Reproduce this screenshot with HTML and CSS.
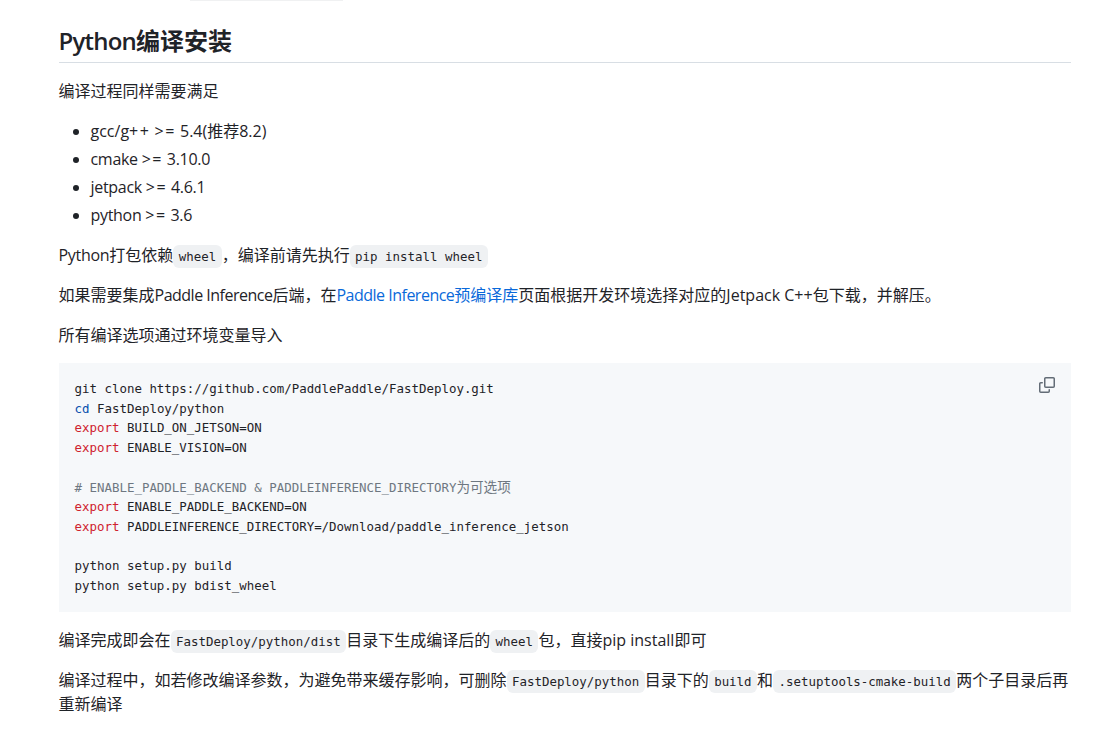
FILE: index.html
```html
<!DOCTYPE html>
<html lang="zh-CN">
<head>
<meta charset="utf-8">
<title>Python编译安装</title>
<link rel="stylesheet" href="styles.css">
</head>
<body>
<div class="top-sliver"></div>
<article class="markdown">
<h2><span class="title-latin">Python</span>编译安装</h2>
<p>编译过程同样需要满足</p>
<ul>
<li>gcc/g<span class="wide">++</span> <span class="wide">&gt;=</span> 5.4(推荐8.2)</li>
<li class="tight">cmake <span class="wide">&gt;=</span> 3.10.0</li>
<li class="tight">jetpack <span class="wide">&gt;=</span> 4.6.1</li>
<li class="tight">python <span class="wide">&gt;=</span> 3.6</li>
</ul>
<p><span class="tight">Python</span>打包依赖<code>wheel</code>，编译前请先执行<code>pip install wheel</code></p>
<p>如果需要集成<span class="narrow">Paddle Inference</span>后端，在<a href="#"><span class="narrow">Paddle Inference</span>预编译库</a>页面根据开发环境选择对应的Jetpack C++包下载，并解压。</p>
<p>所有编译选项通过环境变量导入</p>
<div class="code-block">
<pre>git clone https://github.com/PaddlePaddle/FastDeploy.git
<span class="builtin">cd</span> FastDeploy/python
<span class="kw">export</span> BUILD_ON_JETSON=ON
<span class="kw">export</span> ENABLE_VISION=ON

<span class="comment"># ENABLE_PADDLE_BACKEND &amp; PADDLEINFERENCE_DIRECTORY<span class="cjk">为可选项</span></span>
<span class="kw">export</span> ENABLE_PADDLE_BACKEND=ON
<span class="kw">export</span> PADDLEINFERENCE_DIRECTORY=/Download/paddle_inference_jetson

python setup.py build
python setup.py bdist_wheel</pre>
<svg class="copy" viewBox="0 0 16 16" width="16" height="16" aria-hidden="true"><path d="M0 6.75C0 5.784.784 5 1.75 5h1.5a.75.75 0 0 1 0 1.5h-1.5a.25.25 0 0 0-.25.25v7.5c0 .138.112.25.25.25h7.5a.25.25 0 0 0 .25-.25v-1.5a.75.75 0 0 1 1.5 0v1.5A1.75 1.75 0 0 1 9.25 16h-7.5A1.75 1.75 0 0 1 0 14.25Z"/><path d="M5 1.75C5 .784 5.784 0 6.75 0h7.5C15.216 0 16 .784 16 1.75v7.5A1.75 1.75 0 0 1 14.25 11h-7.5A1.75 1.75 0 0 1 5 9.25Zm1.75-.25a.25.25 0 0 0-.25.25v7.5c0 .138.112.25.25.25h7.5a.25.25 0 0 0 .25-.25v-7.5a.25.25 0 0 0-.25-.25Z"/></svg>
</div>
<p>编译完成即会在<code>FastDeploy/python/dist</code>目录下生成编译后的<code>wheel</code>包，直接pip install即可</p>
<p>编译过程中，如若修改编译参数，为避免带来缓存影响，可删除<code>FastDeploy/python</code>目录下的<code>build</code>和<code>.setuptools-cmake-build</code>两个子目录后再重新编译</p>
</article>
</body>
</html>
```
FILE: styles.css
```css
html, body {
  margin: 0;
  padding: 0;
  background: #fff;
  overflow: hidden;
}
body {
  color: #1f2328;
  font-family: "Open Sans", "Noto Sans CJK SC", sans-serif;
  font-size: 16px;
  line-height: 24px;
}
.top-sliver {
  width: 153px;
  height: 1px;
  margin-left: 190px;
  background: #f0f1f2;
}
.markdown {
  width: 1012.5px;
  margin-left: 58.5px;
  padding-top: 25px;
}
h2 {
  margin: 0 0 16px;
  padding-bottom: 6px;
  border-bottom: 1px solid #d8dee4;
  font-size: 24px;
  font-weight: 600;
  line-height: 30px;
}
.title-latin {
  letter-spacing: -0.8px;
}
p {
  margin: 0 0 16px;
}
ul {
  margin: 0 0 16px;
  padding-left: 32px;
}
li + li {
  margin-top: 4px;
}
a {
  color: #0969da;
  text-decoration: none;
}
.tight {
  letter-spacing: -0.3px;
}
.narrow {
  letter-spacing: -0.5px;
}
.wide {
  letter-spacing: 1.5px;
}
code {
  padding: 4px 5.44px;
  border-radius: 6px;
  background: #eff1f3;
  font-family: "DejaVu Sans Mono", "Noto Sans CJK SC", monospace;
  font-size: 12.45px;
  line-height: 1;
}
.code-block {
  position: relative;
  margin-bottom: 16px;
  background: #f6f8fa;
}
pre {
  margin: 0;
  padding: 16px;
  font-family: "DejaVu Sans Mono", "Noto Sans CJK SC", monospace;
  font-size: 12.45px;
  line-height: 19.72px;
  color: #1f2328;
}
.kw { color: #cf222e; }
.builtin { color: #0550ae; }
.comment { color: #6e7781; }
.cjk {
  font-size: 13.6px;
  line-height: 1;
}
.copy {
  position: absolute;
  top: 14px;
  right: 16px;
  fill: #636c76;
}
```
